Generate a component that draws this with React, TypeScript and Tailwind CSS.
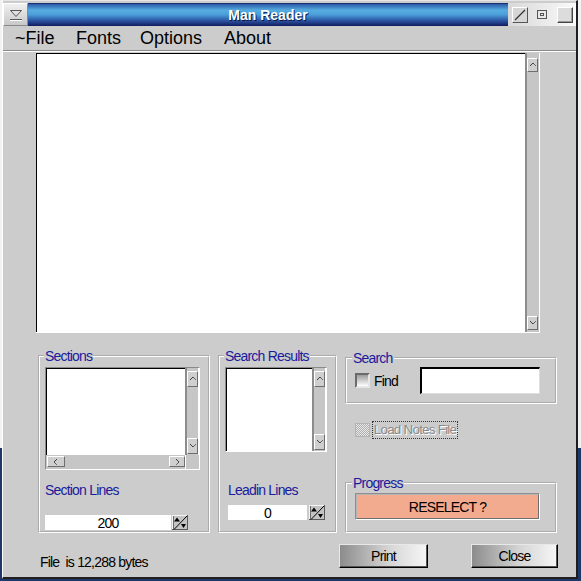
import React from "react";

const narrow = "font-['Liberation_Sans',sans-serif] tracking-[-0.8px]";
const blue = "text-[#1a1a9c]";

type Dir = "up" | "down" | "left" | "right";

const Caret = ({ dir }: { dir: Dir }) => {
    const pts = {
        up: "1,5 4,2 7,5",
        down: "1,2 4,5 7,2",
        left: "5,1 2,4 5,7",
        right: "3,1 6,4 3,7",
    }[dir];
    return (
        <svg width="8" height="8" viewBox="0 0 8 8">
            <polyline points={pts} fill="none" stroke="#000" strokeWidth="1" strokeDasharray="1 0.6" />
        </svg>
    );
};

const ArrowBtn = ({ dir, className }: { dir: Dir; className: string }) => (
    <div
        className={`flex items-center justify-center bg-[#cfcfcf] border border-t-white border-l-white border-r-[#6e6e6e] border-b-[#6e6e6e] ${className}`}>
        <Caret dir={dir} />
    </div>
);

const VScroll = ({ big }: { big?: boolean }) => (
    <div
        className={`flex flex-col justify-between bg-[#c6c6c6] border-l-2 border-l-[#8c8c8c] border-r border-r-white ${
            big ? "w-[15px] pt-[5px] pb-[2px]" : "w-[14px] pt-[3px] pb-[1px]"
        }`}>
        <ArrowBtn dir="up" className={big ? "h-[14px] w-[11px]" : "h-[16px] w-[11px]"} />
        <ArrowBtn dir="down" className={big ? "h-[14px] w-[11px]" : "h-[16px] w-[11px]"} />
    </div>
);

const SpinBtn = () => (
    <svg width="16" height="15" viewBox="0 0 16 15" className="block">
        <rect x="0" y="0" width="16" height="15" fill="#c4c4c4" />
        <path d="M0 0H16V1H1V15H0Z" fill="#f4f4f4" />
        <path d="M1 1H2V15H1Z" fill="#6a6a6a" />
        <path d="M15 0H16V15H0V14H15Z" fill="#5a5a5a" />
        <line x1="2" y1="14.5" x2="15" y2="1" stroke="#000" strokeWidth="1" />
        <path d="M5 2.5 L8 6.5 H2Z" fill="#000" />
        <path d="M9 9 H14 L11.5 13Z" fill="#000" />
    </svg>
);

const Legend = ({ children, ml }: { children: React.ReactNode; ml: string }) => (
    <legend className={`${ml} px-[1px] text-[14px] leading-[14px] whitespace-nowrap ${blue}`}>{children}</legend>
);

const group = "border-2 [border-style:groove] border-white p-0 m-0 min-w-0";
const btn =
    "h-[24px] bg-[linear-gradient(to_right,#8c8c8c,#d4d4d4_55%,#f6f6f6)] border border-t-[#e8e8e8] border-l-[#e8e8e8] border-r-black border-b-black shadow-[inset_-1px_-1px_0_#555] text-[14px] leading-none";

const App = () => {
    return (
        <div className="w-[581px] h-[581px] overflow-hidden pl-[2px] bg-[linear-gradient(to_bottom,#f2f2f2_0px,#f2f2f2_448px,#1d3868_448px)]">
            <div
                className={`w-[576px] h-[579px] bg-[#cccccc] border-l border-l-white border-t border-t-[#e6e6e6] border-r-2 border-r-[#1e1e1e] border-b-2 border-b-[#202020] flex flex-col text-black ${narrow}`}>
                {/* title bar */}
                <div className="flex h-[23px] mt-[2px]">
                    <div className="w-[25px] flex items-center justify-center bg-[linear-gradient(to_bottom,#f0f0f0,#c8c8c8)] border border-t-white border-l-white border-r-[#8a8a8a] border-b-[#8a8a8a]">
                        <svg width="14" height="13" viewBox="0 0 14 13">
                            <path d="M1.5 2.5 H12.5 L7 8.5 Z" fill="none" stroke="#555" strokeWidth="1" />
                            <line x1="1" y1="11.5" x2="13" y2="11.5" stroke="#555" strokeWidth="1" />
                            <line x1="1" y1="12.5" x2="13" y2="12.5" stroke="#fff" strokeWidth="1" />
                        </svg>
                    </div>
                    <div className="w-[480px] flex items-center justify-center bg-[linear-gradient(to_bottom,#2a5aa6_0%,#56ade0_28%,#4c9ed8_48%,#2c56a4_75%,#111b5e_100%)] border-t border-t-[#1a2e70]">
                        <span className="tracking-normal font-bold text-[14px] text-white [text-shadow:1px_1px_0_#0a1440]">
                            Man Reader
                        </span>
                    </div>
                    <div className="flex-1 flex items-center bg-[linear-gradient(to_right,#d8d8d8,#fafafa)] pl-[4px]">
                        <div className="w-[16px] h-[16px] bg-[#d6d6d6] border border-t-white border-l-white border-r-[#555] border-b-[#555] flex">
                            <svg width="14" height="14" viewBox="0 0 14 14">
                                <line x1="2" y1="12" x2="12" y2="2" stroke="#333" strokeWidth="1.2" />
                            </svg>
                        </div>
                        <div className="ml-[9px] w-[10px] h-[9px] border border-[#555] bg-[#e8e8e8] flex items-center justify-center">
                            <div className="w-[4px] h-[3px] border border-[#555]" />
                        </div>
                        <div className="ml-[10px] w-[16px] h-[16px] bg-[#dcdcdc] border border-t-white border-l-white border-r-[#444] border-b-[#444] shadow-[inset_-1px_-1px_0_#999]" />
                    </div>
                </div>

                {/* menu bar */}
                <div className="flex h-[24px] items-center tracking-normal text-[18px] leading-[24px]">
                    <span className="ml-[12px] w-[61px]">~File</span>
                    <span className="w-[64px]">Fonts</span>
                    <span className="w-[84px]">Options</span>
                    <span>About</span>
                </div>
                <div className="h-[2px] border-t border-t-[#8a8a8a] border-b border-b-white" />

                {/* main text area */}
                <div className="mt-[1px] ml-[33px] w-[504px] h-[280px] flex border-b border-b-white">
                    <div className="flex-1 bg-white border-t border-l border-black" />
                    <VScroll big />
                </div>

                {/* lower panels */}
                <div className="mt-[16px] ml-[35px] flex items-start">
                    <fieldset className={`${group} w-[172px] h-[184px]`}>
                        <Legend ml="ml-[4px]">Sections</Legend>
                        <div className="mt-[4px] ml-[5px] w-[155px] h-[103px] flex flex-col border border-t-[#8a8a8a] border-l-[#8a8a8a] border-r-white border-b-white">
                            <div className="flex h-[87px]">
                                <div className="flex-1 bg-white border-t border-l border-black" />
                                <VScroll />
                            </div>
                            <div className="flex h-[14px] bg-[#c6c6c6]">
                                <ArrowBtn dir="left" className="ml-[1px] mt-[1px] w-[18px] h-[11px]" />
                                <div className="flex-1" />
                                <ArrowBtn dir="right" className="mt-[1px] w-[16px] h-[11px]" />
                                <div className="w-[14px] border-l border-l-white" />
                            </div>
                        </div>
                        <div className={`mt-[12px] ml-[5px] text-[14px] leading-[16px] ${blue}`}>Section Lines</div>
                        <div className="mt-[17px] ml-[5px] flex h-[15px]">
                            <div className="w-[126px] bg-white flex items-center justify-center text-[14px] leading-none">200</div>
                            <div className="ml-[1px]">
                                <SpinBtn />
                            </div>
                        </div>
                    </fieldset>

                    <fieldset className={`${group} ml-[8px] w-[119px] h-[184px]`}>
                        <Legend ml="ml-[4px]">Search Results</Legend>
                        <div className="mt-[4px] ml-[5px] w-[102px] h-[85px] flex border border-t-[#8a8a8a] border-l-[#8a8a8a] border-r-white border-b-white">
                            <div className="flex-1 bg-white border-t border-l border-black" />
                            <VScroll />
                        </div>
                        <div className={`mt-[30px] ml-[8px] text-[14px] leading-[16px] ${blue}`}>Leadin Lines</div>
                        <div className="mt-[7px] ml-[8px] flex h-[15px]">
                            <div className="w-[79px] bg-white flex items-center justify-center text-[14px] leading-none">0</div>
                            <div className="ml-[2px]">
                                <SpinBtn />
                            </div>
                        </div>
                    </fieldset>

                    <div className="ml-[8px] mt-[2px] w-[212px] flex flex-col">
                        <fieldset className={`${group} w-[212px] h-[53px]`}>
                            <Legend ml="ml-[5px]">Search</Legend>
                            <div className="mt-[2px] h-[27px] flex items-center">
                                <div className="ml-[8px] w-[15px] h-[15px] border-2 border-t-[#6a6a6a] border-l-[#6a6a6a] border-r-[#e6e6e6] border-b-[#e6e6e6] bg-[linear-gradient(to_bottom,#9c9c9c,#ffffff)]" />
                                <span className="ml-[4px] text-[14px] leading-[16px]">Find</span>
                                <div className="ml-auto mr-[15px] w-[120px] h-[27px] bg-white border-t-2 border-l-2 border-t-black border-l-black border-r border-b border-r-[#dedede] border-b-[#dedede]" />
                            </div>
                        </fieldset>

                        <div className="mt-[17px] h-[18px] flex items-center">
                            <div className="ml-[10px] w-[15px] h-[14px] border border-[#b4b4b4] bg-[repeating-conic-gradient(#b0b0b0_0_25%,#e8e8e8_0_50%)] bg-[length:2px_2px]" />
                            <div className="ml-[2px] h-[18px] w-[86px] border border-dotted border-[#333] flex items-center justify-center whitespace-nowrap text-[13.5px] leading-none text-[#8a8a8a] [text-shadow:1px_1px_0_#ffffff]">
                                Load Notes File
                            </div>
                        </div>

                        <fieldset className={`${group} mt-[37px] w-[212px] h-[57px]`}>
                            <Legend ml="ml-[5px]">Progress</Legend>
                            <div className="mt-[3px] ml-[8px] w-[185px] h-[27px] border border-t-[#8e8e8e] border-l-[#8e8e8e] border-r-white border-b-white">
                                <div className="h-full bg-[#f3ab8f] border border-t-[#b4b4b4] border-l-[#b4b4b4] border-r-[#6e6e6e] border-b-[#6e6e6e] flex items-center justify-center text-[14px] leading-none">
                                    RESELECT ?
                                </div>
                            </div>
                        </fieldset>
                    </div>
                </div>

                {/* bottom row */}
                <div className="mt-[11px] flex items-start">
                    <div className="ml-[37px] mt-[10px] w-[299px] text-[14px] leading-[16px] whitespace-pre">File  is 12,288 bytes</div>
                    <button className={`${btn} w-[89px]`}>Print</button>
                    <button className={`${btn} ml-[43px] w-[87px]`}>Close</button>
                </div>
            </div>
        </div>
    );
};

export default App;
